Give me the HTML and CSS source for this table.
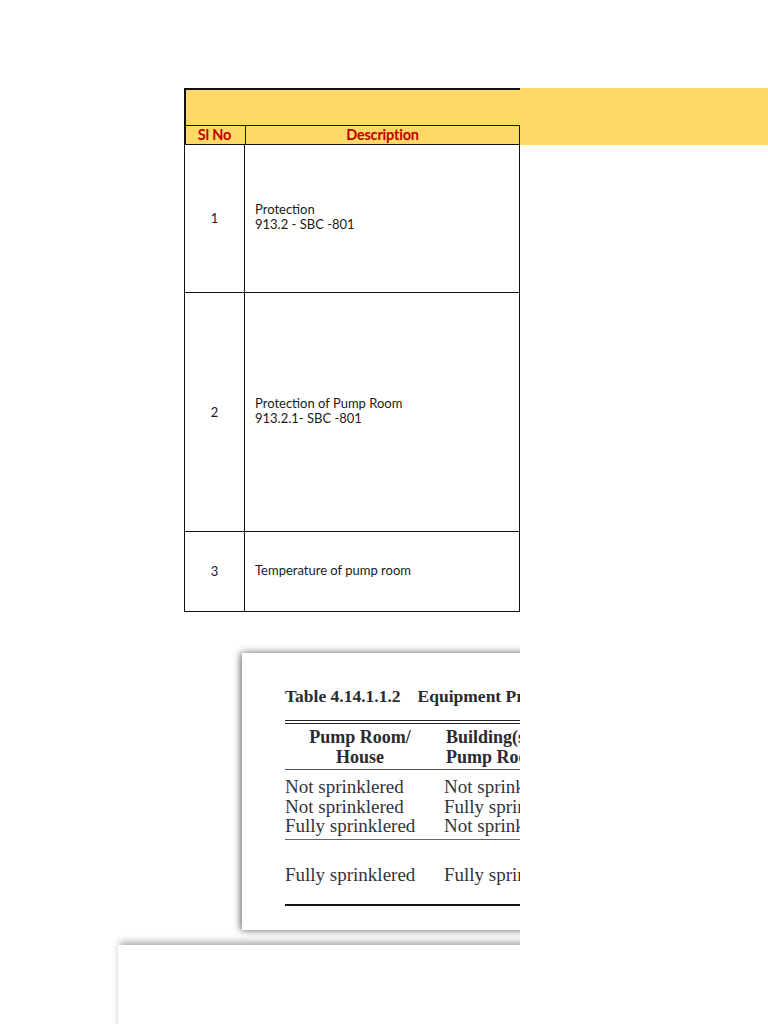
FILE: index.html
```html
<!DOCTYPE html>
<html>
<head>
<meta charset="utf-8">
<link rel="stylesheet" href="styles.css">
</head>
<body>
<div class="page">
  <div class="band">
    <div class="title-cell"></div>
    <div class="head-row">
      <div class="hcell hcell-no">Sl No</div>
      <div class="hcell hcell-desc">Description</div>
    </div>
  </div>
  <div class="sheet">
    <div class="table">
      <div class="row row-1">
        <div class="cell cell-no">1</div>
        <div class="cell cell-desc">Protection<br>913.2 - SBC -801</div>
      </div>
      <div class="row row-2">
        <div class="cell cell-no">2</div>
        <div class="cell cell-desc">Protection of Pump Room<br>913.2.1- SBC -801</div>
      </div>
      <div class="row row-3">
        <div class="cell cell-no">3</div>
        <div class="cell cell-desc">Temperature of pump room</div>
      </div>
    </div>
    <div class="shot">
      <div class="shot-title">Table 4.14.1.1.2<span class="gap"></span>Equipment Protection Based on Sprinklering</div>
      <div class="rule-double"></div>
      <div class="grid grid-head">
        <div class="c1 center">Pump Room/<br>House</div>
        <div class="c2 center">Building(s) Exposing<br>Pump Room/House</div>
      </div>
      <div class="grid grid-body">
        <div class="c1">Not sprinklered<br>Not sprinklered<br>Fully sprinklered</div>
        <div class="c2">Not sprinklered<br>Fully sprinklered<br>Not sprinklered</div>
      </div>
      <div class="grid grid-last">
        <div class="c1">Fully sprinklered</div>
        <div class="c2">Fully sprinklered</div>
      </div>
    </div>
    <div class="shot2"></div>
  </div>
</div>
</body>
</html>
```
FILE: styles.css
```css
* { box-sizing: border-box; }
html, body { margin: 0; padding: 0; background: #fff; }
body { font-family: Lato, "Liberation Sans", sans-serif; color: #1a1a1a; }
.page { padding-top: 88px; height: 1024px; overflow: hidden; }

.band {
  margin-left: 184px;
  background: #FFD966;
  height: 57px;
}
.title-cell {
  width: 336px;
  height: 37px;
  border-top: 2px solid #111;
  border-left: 2px solid #111;
}
.head-row {
  width: 336px;
  height: 20px;
  display: grid;
  grid-template-columns: 60px 1fr;
  border: 1px solid #111;
  border-left-width: 2px;
}
.hcell {
  color: #C00000;
  font-weight: 700;
  font-size: 14.5px;
  line-height: 17px;
  text-align: center;
  letter-spacing: -0.2px;
}
.hcell-no { border-right: 1px solid #111; padding-right: 2px; }

.sheet { width: 520px; height: 900px; overflow: hidden; }
.table { margin-left: 184px; width: 336px; }
.row {
  display: grid;
  grid-template-columns: 60px 1fr;
  border-left: 1px solid #111;
  border-right: 1px solid #111;
  border-bottom: 1px solid #111;
}
.row-1 { height: 148px; }
.row-2 { height: 239px; }
.row-3 { height: 80px; }
.cell {
  display: flex;
  align-items: center;
  font-size: 13px;
  line-height: 15px;
}
.cell-no { justify-content: center; border-right: 1px solid #111; }
.cell-desc { padding-left: 10px; padding-bottom: 3px; }

.shot {
  margin-top: 41px;
  margin-left: 242px;
  width: 420px;
  background: #fff;
  box-shadow: -2px 0 6px rgba(0,0,0,0.35), 0 0 9px rgba(0,0,0,0.35);
  padding: 33px 0 24px 43px;
  font-family: "Liberation Serif", serif;
  color: #33333b;
}
.shot-title {
  font-weight: 700;
  font-size: 17.5px;
  line-height: 20px;
  white-space: nowrap;
  color: #2a2a30;
}
.gap { display: inline-block; width: 17px; }
.rule-double {
  margin-top: 14px;
  height: 4px;
  border-top: 1px solid #222;
  border-bottom: 1px solid #222;
}
.grid {
  display: grid;
  grid-template-columns: 150px 1fr;
  column-gap: 9px;
  white-space: nowrap;
}
.grid-head {
  padding: 3px 0 2px;
  border-bottom: 1px solid #555;
  font-weight: 700;
  font-size: 18px;
  line-height: 20px;
  color: #2a2a30;
}
.grid-head .c2 { text-align: left; padding-left: 2px; }
.center { text-align: center; }
.grid-body {
  padding: 7px 0 3px;
  border-bottom: 1px solid #666;
  font-size: 19px;
  line-height: 19.5px;
}
.grid-last {
  padding: 25px 0 19px;
  border-bottom: 2px solid #111;
  font-size: 19px;
  line-height: 20px;
}

.shot2 {
  margin-top: 15px;
  margin-left: 118px;
  width: 500px;
  height: 200px;
  background: #fff;
  box-shadow: 0 -5px 7px -2px rgba(0,0,0,0.35);
}
```
